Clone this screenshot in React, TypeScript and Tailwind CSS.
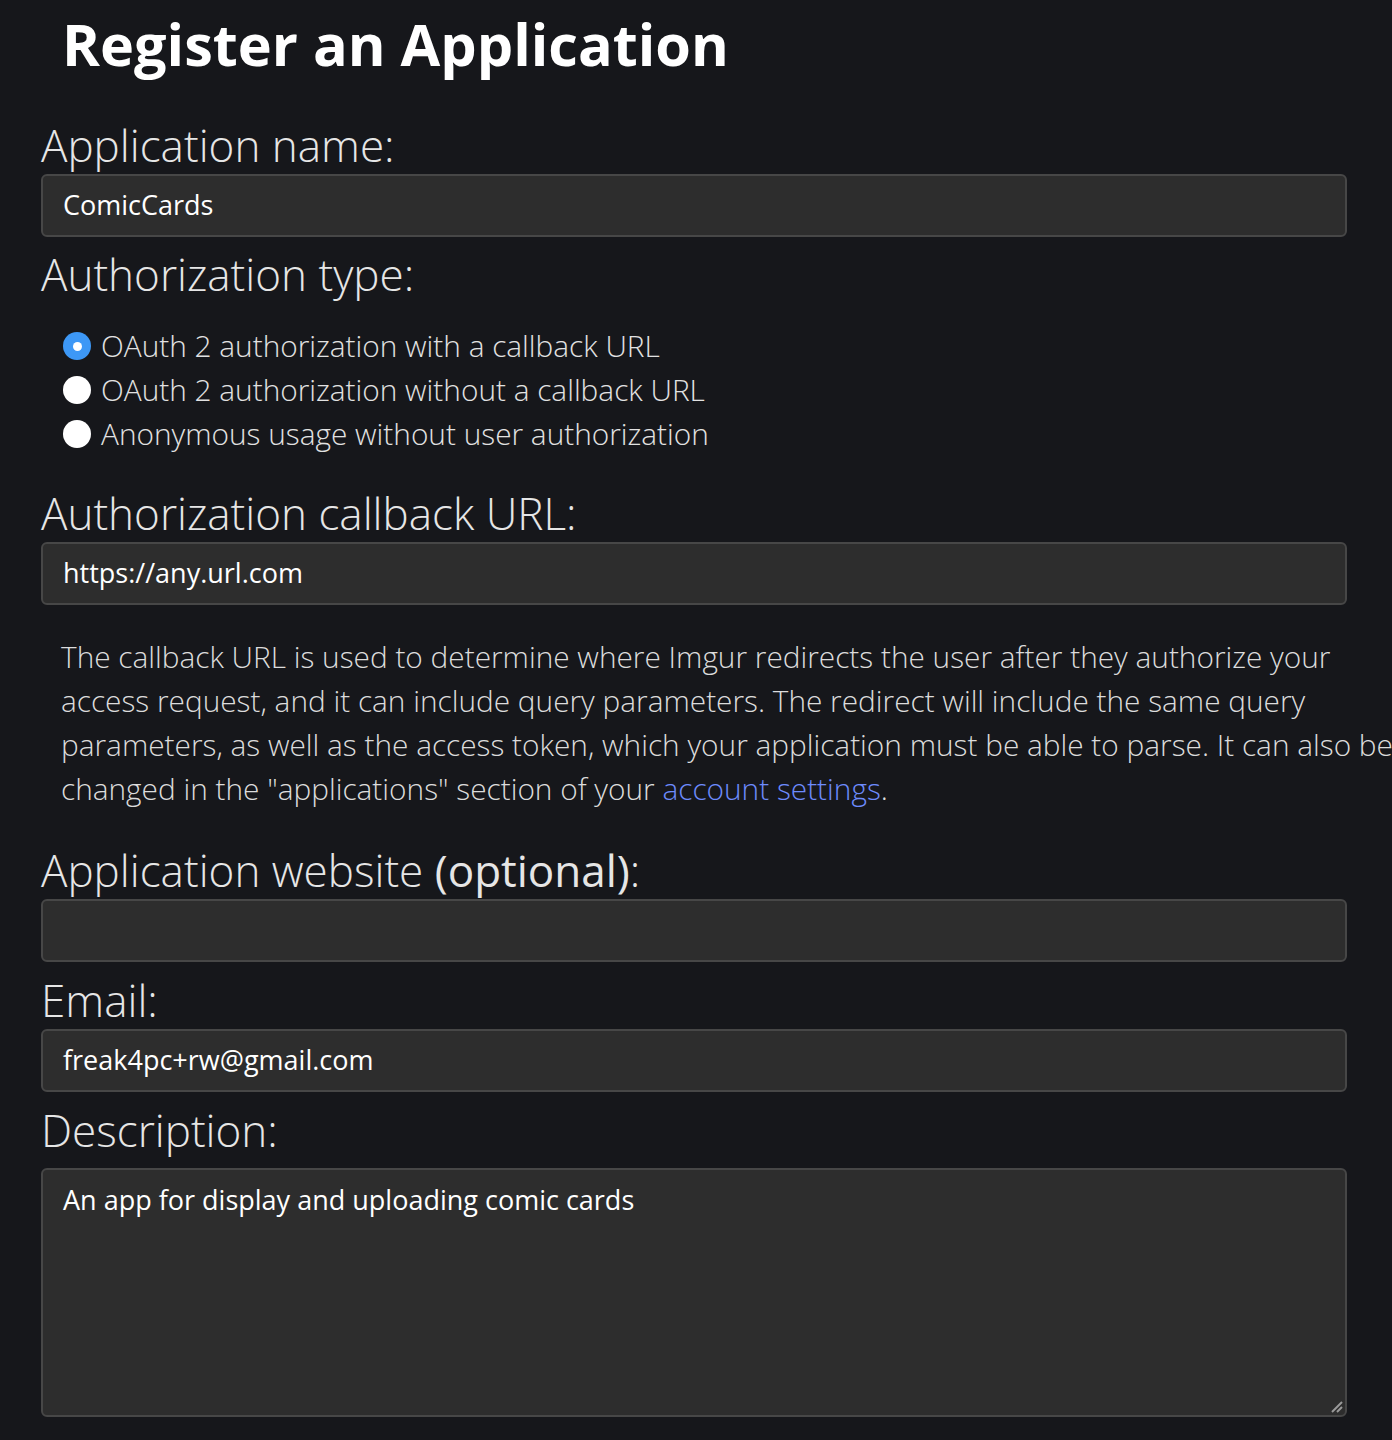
import React from 'react';

const Label: React.FC<{ children: React.ReactNode; className?: string }> = ({ children, className = '' }) => (
  <label className={`block text-[44px] leading-[48px] font-light text-[#e6e6e6] ${className}`}>{children}</label>
);

const Field: React.FC<{ value?: string; className?: string }> = ({ value = '', className = '' }) => (
  <div
    className={`h-[63px] w-[1306px] rounded-[6px] border-2 border-[#474747] bg-[#2d2d2d] px-[20px] flex items-center text-[27px] font-medium text-white ${className}`}
  >
    {value}
  </div>
);

const Radio: React.FC<{ checked?: boolean; label: string }> = ({ checked, label }) => (
  <div className="flex items-center h-[44px] pl-[22px]">
    {checked ? (
      <span className="w-[28px] h-[28px] rounded-full bg-[#3d98f6] flex items-center justify-center mr-[10px]">
        <span className="w-[9px] h-[9px] rounded-full bg-white" />
      </span>
    ) : (
      <span className="w-[28px] h-[28px] rounded-full bg-white mr-[10px]" />
    )}
    <span className="text-[29.8px] font-light text-[#e2e2e2]">{label}</span>
  </div>
);

export default function App() {
  return (
    <div className="min-h-[1440px] w-[1392px] overflow-hidden bg-[#16171b] font-['Open_Sans',sans-serif] pl-[41px]">
      <h1 className="pt-[15px] pl-[21px] text-[57.6px] leading-[58px] font-bold text-white">Register an Application</h1>

      <Label className="mt-[48px]">Application name:</Label>
      <Field value="ComicCards" className="mt-[5px]" />

      <Label className="mt-[13px]">Authorization type:</Label>
      <div className="mt-[26px]">
        <Radio checked label="OAuth 2 authorization with a callback URL" />
        <Radio label="OAuth 2 authorization without a callback URL" />
        <Radio label="Anonymous usage without user authorization" />
      </div>

      <Label className="mt-[33px]">Authorization callback URL:</Label>
      <Field value="https://any.url.com" className="mt-[5px]" />

      <p className="mt-[30px] pl-[20px] text-[29.8px] leading-[44px] font-light text-[#dcdcdc] whitespace-nowrap">
        The callback URL is used to determine where Imgur redirects the user after they authorize your
        <br />
        access request, and it can include query parameters. The redirect will include the same query
        <br />
        parameters, as well as the access token, which your application must be able to parse. It can also be
        <br />
        changed in the "applications" section of your <a className="text-[#6d8bfc]">account settings</a>.
      </p>

      <Label className="mt-[35px]">
        Application website <span className="font-normal">(optional)</span>:
      </Label>
      <Field className="mt-[5px]" />

      <Label className="mt-[14px]">Email:</Label>
      <Field value="freak4pc+rw@gmail.com" className="mt-[5px]" />

      <Label className="mt-[14px]">Description:</Label>
      <div className="relative mt-[14px] h-[249px] w-[1306px] rounded-[6px] border-2 border-[#474747] bg-[#2d2d2d] px-[20px] pt-[10px] text-[27px] font-medium leading-[40px] text-white">
        An app for display and uploading comic cards
        <svg className="absolute right-[2px] bottom-[2px]" width="14" height="14" viewBox="0 0 14 14">
          <path d="M13 3 L3 13" stroke="#9a9a9a" strokeWidth="2" />
          <path d="M13 8 L8 13" stroke="#9a9a9a" strokeWidth="2" />
        </svg>
      </div>
    </div>
  );
}
